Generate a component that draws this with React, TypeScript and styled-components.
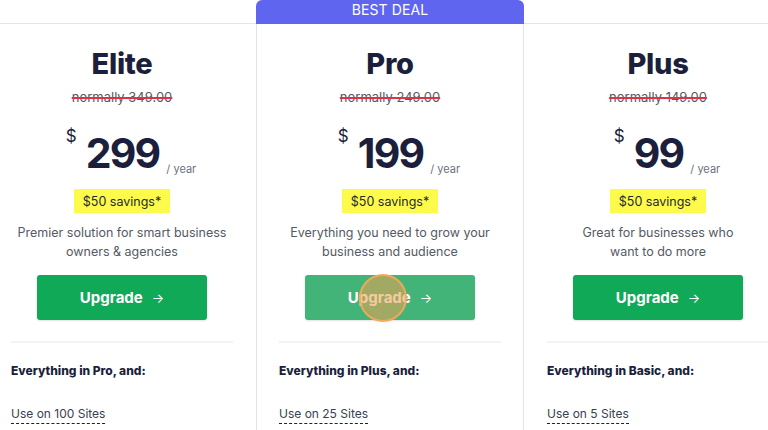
import React from "react";
import styled, { createGlobalStyle } from "styled-components";

const Global = createGlobalStyle`
  html, body { margin: 0; padding: 0; background: #fff; overflow: hidden; }
  body { font-family: Inter, "Noto Sans", sans-serif; color: #1b1f3b; }
  * { box-sizing: border-box; }
`;

const Page = styled.div`
  width: 768px;
  height: 430px;
  overflow: hidden;
`;

const Grid = styled.div`
  display: grid;
  grid-template-columns: repeat(3, 268px);
  margin-left: -12px;
  width: 804px;
`;

const Column = styled.div`
  display: flex;
  flex-direction: column;
`;

const Badge = styled.div<{ $show: boolean }>`
  height: 24px;
  display: flex;
  align-items: center;
  justify-content: center;
  background: ${(p) => (p.$show ? "#6065f0" : "transparent")};
  border-bottom: 1px solid ${(p) => (p.$show ? "#6065f0" : "#e4e4e7")};
  border-radius: ${(p) => (p.$show ? "6px 6px 0 0" : "0")};
  color: #fff;
  font-size: 14px;
  letter-spacing: 0.1px;
  padding-bottom: 4px;
`;

const Card = styled.div<{ $featured: boolean }>`
  display: flex;
  flex-direction: column;
  align-items: center;
  padding: 22px 22px 0;
  height: 406px;
  border-left: 1px solid ${(p) => (p.$featured ? "#e4e4e7" : "transparent")};
  border-right: 1px solid ${(p) => (p.$featured ? "#e4e4e7" : "transparent")};
`;

const Title = styled.h2`
  margin: 0;
  font-size: 29px;
  line-height: 36px;
  font-weight: 800;
  color: #1b1f3b;
  letter-spacing: -0.3px;
`;

const Normally = styled.div`
  margin-top: 5px;
  font-size: 13px;
  line-height: 20px;
  color: #555a64;
  text-decoration: line-through;
  text-decoration-color: #d9344a;
  text-decoration-thickness: 1.5px;
`;

const PriceRow = styled.div`
  margin-top: 21px;
  margin-left: 18px;
  display: flex;
  align-items: flex-start;
  height: 50px;
`;

const Currency = styled.span`
  font-size: 17px;
  line-height: 20px;
  margin-top: -2px;
  margin-right: 9px;
  color: #1b1f3b;
`;

const Amount = styled.span`
  font-size: 41px;
  line-height: 50px;
  font-weight: 700;
  letter-spacing: -1.8px;
  color: #1b1f3b;
`;

const Per = styled.span`
  font-size: 11px;
  color: #6b7280;
  align-self: flex-end;
  margin-left: 7px;
  margin-bottom: 2px;
`;

const Savings = styled.div`
  margin-top: 11px;
  background: #fcfa4a;
  padding: 0 9px;
  height: 24px;
  display: flex;
  align-items: center;
  font-size: 12.5px;
  color: #1f2937;
`;

const Desc = styled.p`
  margin: 10px 0 0;
  font-size: 12.5px;
  line-height: 19px;
  color: #555a64;
  text-align: center;
`;

const Button = styled.button<{ $hover: boolean }>`
  position: relative;
  margin-top: 14px;
  width: 170px;
  height: 45px;
  border: none;
  border-radius: 3px;
  background: ${(p) => (p.$hover ? "#43b478" : "#0fa958")};
  color: #fff;
  font-family: Inter, "Noto Sans", sans-serif;
  font-size: 15px;
  font-weight: 700;
  display: flex;
  align-items: center;
  justify-content: center;
  gap: 9px;
  padding: 0;
  box-shadow: 0 1px 2px rgba(0, 0, 0, 0.12);
`;

const Arrow = styled.span`
  font-weight: 400;
  font-size: 13px;
`;

const Cursor = styled.span`
  position: absolute;
  left: 54px;
  top: -1px;
  width: 48px;
  height: 48px;
  border-radius: 50%;
  background: rgba(238, 160, 80, 0.55);
  border: 2px solid rgba(245, 170, 90, 0.9);
`;

const Divider = styled.hr`
  align-self: stretch;
  margin: 21px 0 0;
  border: none;
  height: 2px;
  background: #f3f3f4;
`;

const Features = styled.div`
  align-self: stretch;
  display: flex;
  flex-direction: column;
  gap: 24px;
  margin-top: 18px;
`;

const FeatureHead = styled.div`
  font-size: 12px;
  line-height: 20px;
  font-weight: 800;
  color: #1b1f3b;
`;

const Feature = styled.span`
  align-self: flex-start;
  font-size: 12px;
  line-height: 18px;
  color: #374151;
  border-bottom: 1px dashed #1b1f3b;
`;

type Plan = {
  name: string;
  normal: string;
  price: string;
  desc: string[];
  head: string;
  sites: string;
  featured?: boolean;
};

const plans: Plan[] = [
  {
    name: "Elite",
    normal: "normally 349.00",
    price: "299",
    desc: ["Premier solution for smart business", "owners & agencies"],
    head: "Everything in Pro, and:",
    sites: "Use on 100 Sites",
  },
  {
    name: "Pro",
    normal: "normally 249.00",
    price: "199",
    desc: ["Everything you need to grow your", "business and audience"],
    head: "Everything in Plus, and:",
    sites: "Use on 25 Sites",
    featured: true,
  },
  {
    name: "Plus",
    normal: "normally 149.00",
    price: "99",
    desc: ["Great for businesses who", "want to do more"],
    head: "Everything in Basic, and:",
    sites: "Use on 5 Sites",
  },
];

export default function App() {
  return (
    <Page>
      <Global />
      <Grid>
        {plans.map((p) => (
          <Column key={p.name}>
            <Badge $show={!!p.featured}>{p.featured ? "BEST DEAL" : ""}</Badge>
            <Card $featured={!!p.featured}>
              <Title>{p.name}</Title>
              <Normally>{p.normal}</Normally>
              <PriceRow>
                <Currency>$</Currency>
                <Amount>{p.price}</Amount>
                <Per>/ year</Per>
              </PriceRow>
              <Savings>$50 savings*</Savings>
              <Desc>
                {p.desc[0]}
                <br />
                {p.desc[1]}
              </Desc>
              <Button $hover={!!p.featured}>
                Upgrade <Arrow>→</Arrow>
                {p.featured && <Cursor />}
              </Button>
              <Divider />
              <Features>
                <FeatureHead>{p.head}</FeatureHead>
                <Feature>{p.sites}</Feature>
              </Features>
            </Card>
          </Column>
        ))}
      </Grid>
    </Page>
  );
}
